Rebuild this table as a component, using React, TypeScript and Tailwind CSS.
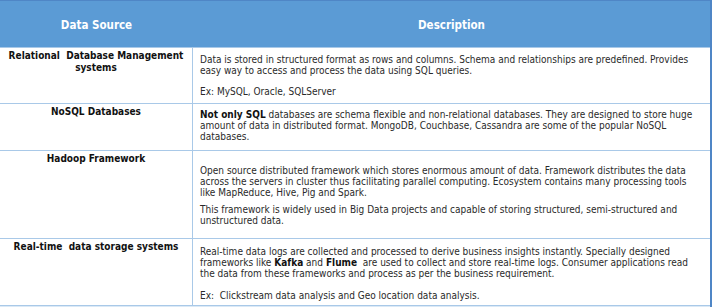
const font = { fontFamily: '"DejaVu Sans Condensed", "DejaVu Sans", Verdana, sans-serif' };

type Row = {
  source: string[];
  body: React.ReactNode;
  h: string;
};

const rows: Row[] = [
  {
    source: ['Relational  Database Management', 'systems'],
    h: 'h-[56px]',
    body: (
      <div className="pt-[6px]">
        <p>Data is stored in structured format as rows and columns. Schema and relationships are predefined. Provides</p>
        <p>easy way to access and process the data using SQL queries.</p>
        <p className="mt-[10px]">Ex: MySQL, Oracle, SQLServer</p>
      </div>
    ),
  },
  {
    source: ['NoSQL Databases'],
    h: 'h-[47px]',
    body: (
      <div className="pt-[5px]">
        <p>
          <b className="text-[#111]">Not only SQL</b> databases are schema flexible and non-relational databases. They are designed to store huge
        </p>
        <p>amount of data in distributed format. MongoDB, Couchbase, Cassandra are some of the popular NoSQL</p>
        <p>databases.</p>
      </div>
    ),
  },
  {
    source: ['Hadoop Framework'],
    h: 'h-[88px]',
    body: (
      <div className="pt-[14px]">
        <p>Open source distributed framework which stores enormous amount of data. Framework distributes the data</p>
        <p>across the servers in cluster thus facilitating parallel computing. Ecosystem contains many processing tools</p>
        <p>like MapReduce, Hive, Pig and Spark.</p>
        <p className="mt-[6px]">This framework is widely used in Big Data projects and capable of storing structured, semi-structured and</p>
        <p>unstructured data.</p>
      </div>
    ),
  },
  {
    source: ['Real-time  data storage systems'],
    h: 'h-[67px]',
    body: (
      <div className="pt-[7px]">
        <p>Real-time data logs are collected and processed to derive business insights instantly. Specially designed</p>
        <p>
          frameworks like <b className="text-[#111]">Kafka</b> and <b className="text-[#111]">Flume</b>  are used to collect and store real-time logs. Consumer applications read
        </p>
        <p>the data from these frameworks and process as per the business requirement.</p>
        <p className="mt-[11px]">Ex:  Clickstream data analysis and Geo location data analysis.</p>
      </div>
    ),
  },
];

export default function App() {
  return (
    <div className="w-[712px] h-[307px] bg-white overflow-hidden" style={font}>
      <div className="w-[712px] border-t border-r-2 border-[#4f86c6]">
        {/* header */}
        <div className="flex h-[46px] pt-[3px] bg-[#5b9bd5] text-white font-bold text-[11.5px] items-center">
          <div className="w-[193px] text-center">Data Source</div>
          <div className="flex-1 text-center">Description</div>
        </div>
        {rows.map((r, i) => (
          <div key={i} className={`flex ${r.h} border-t border-[#a9c9e8]`}>
            <div className="w-[193px] shrink-0 border-r border-[#a9c9e8] pt-[2px] text-center text-[10px] leading-[11.5px] font-bold text-[#111]">
              {r.source.map((s) => (
                <div key={s} className="whitespace-pre">{s}</div>
              ))}
            </div>
            <div className="flex-1 pl-[7px] text-[10px] leading-[11px] text-[#2a2a2a] whitespace-pre">
              {r.body}
            </div>
          </div>
        ))}
        <div className="h-[2px] border-t border-[#a9c9e8] bg-[#dbe9f6]" />
      </div>
    </div>
  );
}
